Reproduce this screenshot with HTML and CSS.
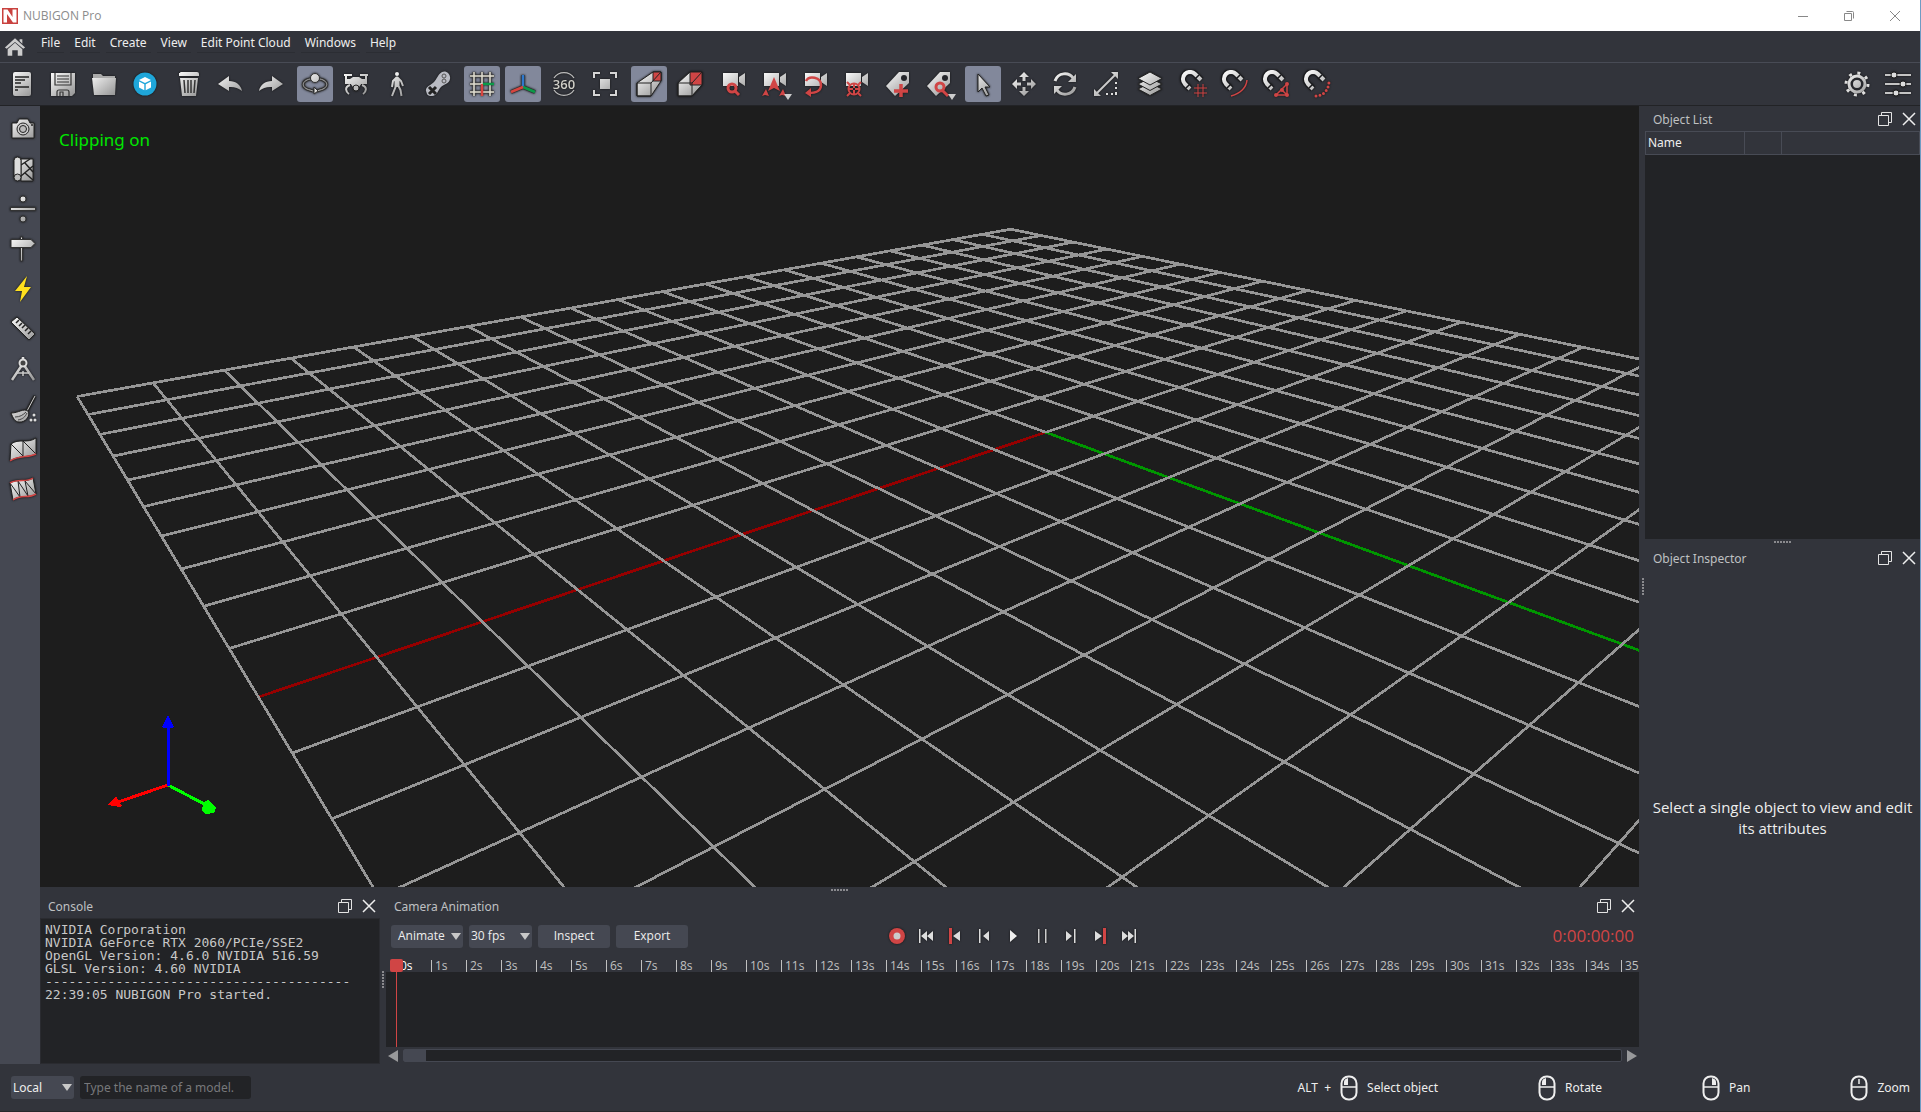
FILE: index.html
```html
<!DOCTYPE html>
<html lang="en">
<head>
<meta charset="utf-8">
<title>NUBIGON Pro</title>
<link rel="stylesheet" href="styles.css">
</head>
<body>
<svg class="defs" width="0" height="0" aria-hidden="true">
  <defs>
    <linearGradient id="metal" gradientUnits="userSpaceOnUse" x1="5" y1="3" x2="23" y2="25"><stop offset="0" stop-color="#f4f4f4"/><stop offset="1" stop-color="#9a9a9a"/></linearGradient>
    <symbol id="float" viewBox="0 0 14 14"><path d="M.5 3.500h10v10h-10zM3.500 3V.5h10v10H11" fill="none" stroke="#e4e4e4"/></symbol>
    <symbol id="close" viewBox="0 0 14 14"><path d="M1 1l12 12M13 1L1 13" fill="none" stroke="#eee" stroke-width="1.500"/></symbol>
    <symbol id="camera" viewBox="0 0 28 28"><path d="M3 3h15v13H3z" fill="url(#metal)"/><path d="M19 7l6-4v13l-6-4z" fill="url(#metal)"/></symbol>
    <symbol id="tag" viewBox="0 0 28 28"><path d="M2 16L15 2h10v11L11 26z" fill="url(#metal)"/><circle cx="20" cy="8" r="3" fill="#24252a"/></symbol>
    <symbol id="magnet" viewBox="0 0 28 28"><path d="M10 19L5 14A7 7 0 0 1 15 4l6 6" fill="none" stroke="#17181b" stroke-width="6"/><path d="M10 19L5 14A7 7 0 0 1 15 4l6 6" fill="none" stroke="url(#metal)" stroke-width="4"/><path d="M6 18l4-4M15 9l4-4" stroke="#17181b" stroke-width="1.500"/></symbol>
    <symbol id="mouse" viewBox="0 0 18 26"><rect x="1.500" y="1.500" width="15" height="23" rx="7" fill="none" stroke="#eee" stroke-width="2"/><path d="M2 12h14" stroke="#eee" stroke-width="1.500"/></symbol>
  </defs>
</svg>
<div class="app">
  <header class="titlebar">
    <svg class="logo" viewBox="0 0 16 16"><rect width="16" height="16" fill="#c9423f"/><path d="M1.500 1.500h4L10.500 9V1.500h4v13h-3.500L5 6v8.500H1.500z" fill="#fff"/></svg>
    <h1>NUBIGON Pro</h1>
    <div class="window-buttons">
      <button aria-label="Minimize"><svg viewBox="0 0 12 12"><path d="M1 6.500h10" stroke="#888"/></svg></button>
      <button aria-label="Restore"><svg viewBox="0 0 12 12"><path d="M1.500 3.500h7v7h-7zM3.500 1.500h6q1 0 1 1v6" fill="none" stroke="#888"/></svg></button>
      <button aria-label="Close window"><svg viewBox="0 0 12 12"><path d="M1 1l10 10M11 1L1 11" stroke="#888"/></svg></button>
    </div>
  </header>

  <nav class="menubar">
    <button class="home" aria-label="Home"><svg viewBox="0 0 24 20"><path d="M12 1l11 10-2 1.500L12 5l-9 7.500L1 11z" fill="#ccc"/><path d="M4 13l8-7 8 7v7h-5v-6H9v6H4zM17 2h3v5l-3-3z" fill="#ccc"/></svg></button>
    <button>File</button><button>Edit</button><button>Create</button><button>View</button><button>Edit Point Cloud</button><button>Windows</button><button>Help</button>
  </nav>

  <div class="toolbar" role="toolbar">
    <div class="group">
      <button aria-label="New"><svg viewBox="0 0 28 28"><rect x="5" y="2" width="18" height="24" rx="2" fill="url(#metal)"/><path d="M7 7h14M7 10h10M7 13h6M7 17h14M7 20h3" stroke="#222" stroke-width="1.500"/></svg></button>
      <button aria-label="Save"><svg viewBox="0 0 28 28"><path d="M2 3h24v20l-3 3H2z" fill="url(#metal)"/><path d="M6 3v12h16V3M8 6h12M8 9h12M8 12h12M8 26v-4q0-2 2-2h8q2 0 2 2v4M11 26v-4h3v4" fill="none" stroke="#333" stroke-width="1.200"/></svg></button>
      <button aria-label="Open"><svg viewBox="0 0 28 28"><path d="M3 9V4h8l2 2h12v3z" fill="#aaa"/><path d="M2 8h24l-1 17H4z" fill="url(#metal)"/></svg></button>
      <button aria-label="Models"><svg viewBox="0 0 28 28"><circle cx="14" cy="14" r="11.500" fill="#1fa6d9"/><path d="M14 7l6 3-6 3-6-3zM8 11.500l5.300 2.700v6L8 17.500zM20 11.500l-5.300 2.700v6l5.300-2.700z" fill="#fff"/></svg></button>
    </div>
    <div class="group">
      <button aria-label="Delete"><svg viewBox="0 0 28 28"><path d="M5 3q0-1 1-1h16q2 0 2 2v2H4V3zM5 8h18l-2 18H7z" fill="url(#metal)"/><path d="M9 10l1 13M13 10v13M16 10v13M20 10l-1 13" stroke="#333" stroke-width="1.500"/></svg></button>
      <button aria-label="Undo"><svg viewBox="0 0 28 28"><path d="M2 14l11-8v5c7 0 12 4 13 10-4-3-8-4.500-13-4v4z" fill="url(#metal)"/></svg></button>
      <button aria-label="Redo"><svg viewBox="0 0 28 28"><path d="M26 14L15 6v5C8 11 3 15 2 21c4-3 8-4.500 13-4v4z" fill="url(#metal)"/></svg></button>
    </div>
    <div class="group">
      <button class="active" aria-label="Orbit"><svg viewBox="0 0 28 28"><path d="M19 9c9 2 9 9 0 11l-3 1M9 9c-9 2-9 9 0 11l3 1" fill="none" stroke="#333" stroke-width="3"/><path d="M19 9c9 2 9 9 0 11l-3 1M9 9c-9 2-9 9 0 11l3 1" fill="none" stroke="#aaa"/><path d="M13 17l4 4-4 3z" fill="#ddd" stroke="#333"/><circle cx="14" cy="8" r="4.500" fill="url(#metal)" stroke="#333"/></svg></button>
      <button aria-label="Drone"><svg viewBox="0 0 28 28"><path d="M2 5h8M18 5h8M4 6v7h20V6M8 15c-6 2-4 7-1 9M20 15c6 2 4 7 1 9" fill="none" stroke="url(#metal)" stroke-width="2"/><path d="M3 9h5l3-2h6l3 2h5v4h-5l-3 4h-6l-3-4H3z" fill="url(#metal)"/><circle cx="14" cy="18" r="3" fill="#bbb" stroke="#222"/></svg></button>
      <button aria-label="Walk"><svg viewBox="0 0 28 28"><circle cx="14" cy="4" r="2" fill="#eee"/><path d="M14 7l-4 4-1 6M14 7l4 4 2 5M12.500 8v9L9 26M15.500 8v8l2 4 1 6M14 8v9" fill="none" stroke="url(#metal)" stroke-width="2"/></svg></button>
      <button aria-label="Gamepad"><svg viewBox="0 0 28 28"><path d="M2 21c-1-4 5-6 8-9S14 4 18 2s9 2 8 7-6 5-9 8-4 9-9 9-5-2-6-5z" fill="#b9bbc3"/><circle cx="20" cy="6" r="2" fill="none" stroke="#555"/><circle cx="20" cy="11" r="2" fill="none" stroke="#555"/><path d="M5 17l7 7M12 17l-7 7" stroke="#222" stroke-width="3"/></svg></button>
    </div>
    <div class="group">
      <button class="active" aria-label="Grid"><svg viewBox="0 0 28 28"><path d="M6 2v24M14 2v12M22 2v24M2 6h24M2 14h12M2 22h24" stroke="#444" stroke-width="3"/><path d="M6 2v24M14 2v12M22 2v24M2 6h24M2 14h12M2 22h24" stroke="#e0ddd0" stroke-width="1.500"/><path d="M14 14v12" stroke="#d8443f" stroke-width="2.500"/><path d="M15 14h11" stroke="#0b9a48" stroke-width="2.500"/></svg></button>
      <button class="active" aria-label="Axes"><svg viewBox="0 0 28 28"><g stroke="#333" stroke-width="4"><path d="M14 5v12M14 17l12 5M14 17L2 22"/></g><path d="M14 5v12" stroke="#2f78cc" stroke-width="2.500"/><path d="M14 17l12 5" stroke="#0b9a48" stroke-width="2.500"/><path d="M14 17L2 22" stroke="#d8443f" stroke-width="2.500"/></svg></button>
      <button aria-label="Panorama"><svg viewBox="0 0 28 28"><path d="M4 8a12 12 0 0 1 20 0M4 20a12 12 0 0 0 20 0" fill="none" stroke="#bbb" stroke-width="1.300"/><text x="14" y="19" text-anchor="middle" class="icon-text">360</text></svg></button>
      <button aria-label="Focus"><svg viewBox="0 0 28 28"><path d="M9 3H3v5M19 3h6v5M9 25H3v-5M19 25h6v-5" fill="none" stroke="#d5d5d5" stroke-width="2"/><rect x="9" y="9" width="10" height="10" fill="url(#metal)"/></svg></button>
    </div>
    <div class="group">
      <button class="active" aria-label="Clip outside"><svg viewBox="0 0 28 28"><path d="M2 13L18 2h8v9L16 26H2z" fill="url(#metal)" stroke="#222"/><path d="M18 2h8v9h-8z" fill="#d04545" stroke="#222"/><path d="M2 13h14v13H2zM16 13L26 2" fill="none" stroke="#222"/></svg></button>
      <button aria-label="Clip inside"><svg viewBox="0 0 28 28"><path d="M2 13L14 2h12v13L16 26H2z" fill="url(#metal)" stroke="#222"/><path d="M14 2h12v13H14z" fill="#d04545"/><path d="M14 2h12v13H14zM2 13h14v13H2zM16 13L26 2M16 26L26 15" fill="none" stroke="#222"/></svg></button>
    </div>
    <div class="group">
      <button aria-label="Find camera"><svg viewBox="0 0 28 28"><use href="#camera"/><circle cx="12" cy="18" r="4" fill="none" stroke="#d04545" stroke-width="3"/><path d="M15 21l4 4" stroke="#d04545" stroke-width="3"/></svg></button>
      <button class="drop" aria-label="Camera path"><svg viewBox="0 0 28 28"><use href="#camera"/><path d="M13 7l6 14-6-3-6 3zM5 19l3 7-4-1-3 1zM22 19l3 7-4-1-3 1z" fill="#d04545"/></svg></button>
      <button aria-label="Reset camera"><svg viewBox="0 0 28 28"><use href="#camera"/><path d="M4 11c3-6 15-4 15 4 0 7-6 8-13 8" fill="none" stroke="#d04545" stroke-width="2.500"/><path d="M3 23l6-5v9z" fill="#d04545"/></svg></button>
      <button aria-label="Camera target"><svg viewBox="0 0 28 28"><use href="#camera"/><circle cx="11" cy="19" r="5.500" fill="none" stroke="#d04545" stroke-width="2"/><path d="M11 14v4M11 20v5M5 19h5M12 19h5M4 12l3 3M18 12l-3 3M4 26l3-3M18 26l-3-3" stroke="#d04545" stroke-width="2"/></svg></button>
      <button aria-label="Add tag"><svg viewBox="0 0 28 28"><use href="#tag"/><path d="M17 14v13M10 21h14" stroke="#d04545" stroke-width="3.500"/></svg></button>
      <button class="drop" aria-label="Find tag"><svg viewBox="0 0 28 28"><use href="#tag"/><circle cx="15" cy="17" r="4" fill="none" stroke="#d04545" stroke-width="3"/><path d="M17 20l6 6" stroke="#d04545" stroke-width="3"/></svg></button>
    </div>
    <div class="group">
      <button class="active" aria-label="Select"><svg viewBox="0 0 28 28"><path d="M9 4v18l4-4 4 8 3-1-4-8h5z" fill="url(#metal)" stroke="#222"/></svg></button>
      <button aria-label="Move"><svg viewBox="0 0 28 28"><path d="M14 2l5 5h-3.500v4h-3V7H9zM14 26l5-5h-3.500v-4h-3v4H9zM2 14l5-5v3.500h4v3H7V19zM26 14l-5-5v3.500h-4v3h4V19z" fill="url(#metal)"/></svg></button>
      <button aria-label="Rotate"><svg viewBox="0 0 28 28"><path d="M4 11C7 2 18 2 22 8M24 17c-3 9-14 9-18 3" fill="none" stroke="url(#metal)" stroke-width="3"/><path d="M25 4v8h-8zM3 24v-8h8z" fill="url(#metal)"/></svg></button>
      <button aria-label="Scale"><svg viewBox="0 0 28 28"><path d="M4 24L24 4" stroke="#ccc" stroke-width="2"/><path d="M26 2v7l-7-7zM2 26v-7l7 7z" fill="url(#metal)"/><path d="M24 12v2M24 17v2M24 22v3M19 24h2M14 24h2" stroke="#ddd" stroke-width="2"/></svg></button>
    </div>
    <div class="group">
      <button aria-label="Layers"><svg viewBox="0 0 28 28"><g fill="url(#metal)" stroke="#222"><path d="M14 13l12 6-12 6.500L2 19z"/><path d="M14 8l12 6-12 6.500L2 14z"/><path d="M14 2l12 6.500-12 6.500L2 8.500z"/></g></svg></button>
    </div>
    <div class="group">
      <button aria-label="Snap to grid"><svg viewBox="0 0 28 28"><use href="#magnet"/><path d="M18 14v13M23 14v13M14 18h13M14 23h13" stroke="#d04545"/></svg></button>
      <button aria-label="Snap to curve"><svg viewBox="0 0 28 28"><use href="#magnet"/><path d="M10 26c7-2 15-6 16-16" fill="none" stroke="#d04545" stroke-width="1.500"/></svg></button>
      <button aria-label="Snap to mesh"><svg viewBox="0 0 28 28"><use href="#magnet"/><path d="M14 25L25 14v11zM20 20l5 5" fill="none" stroke="#d04545" stroke-width="1.500"/><g fill="#d04545"><circle cx="14" cy="25" r="2"/><circle cx="25" cy="25" r="2"/><circle cx="20" cy="20" r="2"/><circle cx="25" cy="14" r="2"/></g></svg></button>
      <button aria-label="Snap to points"><svg viewBox="0 0 28 28"><use href="#magnet"/><path d="M13 26c7 0 13-6 13-15" fill="none" stroke="#d04545" stroke-width="3" stroke-linecap="round" stroke-dasharray="0 4"/></svg></button>
    </div>
    <div class="group end">
      <button aria-label="Settings"><svg viewBox="0 0 28 28"><circle cx="14" cy="14" r="11" fill="none" stroke="#ddd" stroke-width="3" stroke-dasharray="3 5.640"/><circle cx="14" cy="14" r="8" fill="none" stroke="url(#metal)" stroke-width="3"/><circle cx="14" cy="14" r="4" fill="url(#metal)"/></svg></button>
      <button aria-label="Preferences"><svg viewBox="0 0 28 28"><path d="M1 5h26M1 14h26M1 23h26" stroke="#c4c4c4" stroke-width="2"/><g fill="#ddd" stroke="#222"><circle cx="10" cy="5" r="3"/><circle cx="19" cy="14" r="3"/><circle cx="12" cy="23" r="3"/></g></svg></button>
    </div>
  </div>

  <main class="workspace">
    <aside class="sidebar">
      <button aria-label="Snapshot"><svg viewBox="0 0 28 28"><path d="M3 8h5l2-4h9l2 4h4v15H3z" fill="url(#metal)" stroke="#222"/><circle cx="14" cy="14" r="6" fill="#ccc" stroke="#222"/><circle cx="14" cy="14" r="3.500" fill="#bbb" stroke="#222"/><circle cx="23" cy="10" r="1" fill="#222"/></svg></button>
      <button aria-label="Map"><svg viewBox="0 0 28 28"><path d="M12 4h12v22H12z" fill="url(#metal)" stroke="#222"/><path d="M12 10l9-6M16 8l8 9M24 11L12 21M16 18l8 7" fill="none" stroke="#222" stroke-width="1.500"/><rect x="5" y="2" width="7" height="23" rx="3.500" fill="#ddd" stroke="#222"/><circle cx="8.500" cy="22.500" r="3.500" fill="#bbb" stroke="#222"/></svg></button>
      <button aria-label="Slice"><svg viewBox="0 0 28 28"><g fill="url(#metal)" stroke="#333"><rect x="1.500" y="12.500" width="25" height="3"/><circle cx="14" cy="4" r="3"/><circle cx="14" cy="24" r="3"/></g></svg></button>
      <button aria-label="Annotation"><svg viewBox="0 0 28 28"><g fill="url(#metal)" stroke="#333"><path d="M11.500 2h2v24h-2z"/><path d="M2 4.500h20l4 4-4 4H2z"/></g></svg></button>
      <button aria-label="Quick actions"><svg viewBox="0 0 28 28"><path d="M18 1L6 16h7l-2 11 11-15h-7z" fill="#ffe01e"/></svg></button>
      <button aria-label="Measure"><svg viewBox="0 0 28 28"><path d="M2 7l6-5 18 17-6 6z" fill="url(#metal)" stroke="#222"/><path d="M10 5l-3 3M13 8l-3 3M16 10l-3 3M19 13l-3 3M22 16l-3 3" stroke="#222" stroke-width="1.500"/></svg></button>
      <button aria-label="Angle"><svg viewBox="0 0 28 28"><path d="M13 10L3 25M15 10l10 15M14 2v4" stroke="url(#metal)" stroke-width="2.500"/><path d="M8 18h12M14 16v5" stroke="#ccc" stroke-width="1.500"/><circle cx="14" cy="8" r="3.500" fill="#444" stroke="#ddd" stroke-width="2"/></svg></button>
      <button aria-label="Clean"><svg viewBox="0 0 28 28"><path d="M26 1l-8 15" stroke="#222" stroke-width="3"/><path d="M26 1l-8 15" stroke="#ccc"/><path d="M2 18c8 0 12-5 17-2 3 5-3 12-9 11-4 0-6-4-8-9z" fill="url(#metal)" stroke="#222"/><path d="M6 22c5 0 8-2 11-5M9 25c5-1 7-3 9-7" fill="none" stroke="#444"/><g fill="#ddd"><circle cx="25" cy="20" r="1.500"/><circle cx="22" cy="25" r="1.500"/><circle cx="26" cy="25" r="1.500"/></g></svg></button>
      <button aria-label="Surface"><svg viewBox="0 0 28 28"><path d="M2 9c8-6 16 0 25-6v16c-8 4-17 1-26 7z" fill="url(#metal)" stroke="#222"/><path d="M2 9l12 12V6l13 13" fill="none" stroke="#222"/><path d="M1 26c9-6 18-3 26-7" fill="none" stroke="#d04545" stroke-width="1.500"/></svg></button>
      <button aria-label="Dense surface"><svg viewBox="0 0 28 28"><path d="M1 8c8-5 16 0 23-5l3 16c-8 5-15 0-23 6z" fill="url(#metal)" stroke="#222"/><path d="M1 8l10 14L9 6l10 15-3-15 11 13" fill="none" stroke="#222"/><path d="M1 8c8-5 16 0 23-5M4 25c8-6 15-1 23-6" fill="none" stroke="#d04545" stroke-width="1.500"/></svg></button>
    </aside>

    <div class="center">
      <section class="viewport" aria-label="Viewport">
        <svg class="scene" viewBox="40 106 1599 781" preserveAspectRatio="xMinYMin slice">
          <g id="grid" class="grid"></g>
          <g class="gizmo">
            <g stroke="#f00" fill="#f00"><path d="M168 785L118 802"/><path d="M108 805l8-9 6 10-2 1z" stroke="none"/></g>
            <g stroke="#0f0" fill="#0f0"><path d="M168 785l38 20"/><path d="M216 808l-8-8-5 3-1 8 3 3 9-1z" stroke="none"/></g>
            <g stroke="#00f" fill="#00f"><path d="M168 786V727"/><path d="M168 715l-6 12q6 3 12 0z" stroke="none"/></g>
          </g>
        </svg>
        <p class="viewport-note">Clipping on</p>
      </section>

      <div class="split-h"><i class="dots"></i></div>

      <div class="docks">
        <section class="console dock">
          <div class="dock-title"><h2>Console</h2><button aria-label="Float console"><svg><use href="#float"/></svg></button><button aria-label="Close console"><svg><use href="#close"/></svg></button></div>
          <pre>NVIDIA Corporation
NVIDIA GeForce RTX 2060/PCIe/SSE2
OpenGL Version: 4.6.0 NVIDIA 516.59
GLSL Version: 4.60 NVIDIA
---------------------------------------
22:39:05 NUBIGON Pro started.</pre>
        </section>
        <div class="split-v"><i class="dots vertical"></i></div>
        <section class="animation dock">
          <div class="dock-title"><h2>Camera Animation</h2><button aria-label="Float animation"><svg><use href="#float"/></svg></button><button aria-label="Close animation"><svg><use href="#close"/></svg></button></div>
          <div class="controls">
            <div class="controls-left">
              <button class="btn menu">Animate<i class="caret"></i></button>
              <div class="select fps"><select aria-label="Frame rate"><option>30 fps</option></select><i class="caret"></i></div>
              <button class="btn">Inspect</button>
              <button class="btn">Export</button>
            </div>
            <div class="transport">
              <button aria-label="Record"><svg viewBox="0 0 16 16"><circle cx="8" cy="8" r="8" fill="#d04545"/><circle cx="8" cy="8" r="3.500" fill="#ccc"/></svg></button>
              <button aria-label="First"><svg viewBox="0 0 16 16"><path d="M1 1h1.500v14H1zM9 3v10L3 8zM15 3v10L9 8z" fill="#ddd"/></svg></button>
              <button aria-label="Previous key"><svg viewBox="0 0 16 16"><path d="M2 0h3v16H2z" fill="#d04545"/><path d="M13 3v10L6 8z" fill="#ddd"/></svg></button>
              <button aria-label="Step back"><svg viewBox="0 0 16 16"><path d="M3 1h1.500v14H3zM13 3v10L7 8z" fill="#ddd"/></svg></button>
              <button aria-label="Play"><svg viewBox="0 0 16 16"><path d="M5 2l7 6-7 6z" fill="#eee"/></svg></button>
              <button aria-label="Pause"><svg viewBox="0 0 16 16"><path d="M4 1h1.500v14H4zM11 1h1.500v14H11z" fill="#ccc"/></svg></button>
              <button aria-label="Step forward"><svg viewBox="0 0 16 16"><path d="M11 1h1.500v14H11zM3 3v10l6-5z" fill="#ddd"/></svg></button>
              <button aria-label="Next key"><svg viewBox="0 0 16 16"><path d="M11 0h3v16h-3z" fill="#d04545"/><path d="M3 3v10l7-5z" fill="#ddd"/></svg></button>
              <button aria-label="Last"><svg viewBox="0 0 16 16"><path d="M13.500 1H15v14h-1.500zM1 3v10l6-5zM7 3v10l6-5z" fill="#ddd"/></svg></button>
            </div>
            <output class="timecode">0:00:00:00</output>
          </div>
          <div class="timeline">
            <ol class="ruler"><li>0s</li><li>1s</li><li>2s</li><li>3s</li><li>4s</li><li>5s</li><li>6s</li><li>7s</li><li>8s</li><li>9s</li><li>10s</li><li>11s</li><li>12s</li><li>13s</li><li>14s</li><li>15s</li><li>16s</li><li>17s</li><li>18s</li><li>19s</li><li>20s</li><li>21s</li><li>22s</li><li>23s</li><li>24s</li><li>25s</li><li>26s</li><li>27s</li><li>28s</li><li>29s</li><li>30s</li><li>31s</li><li>32s</li><li>33s</li><li>34s</li><li>35s</li></ol>
            <div class="tracks"></div>
            <div class="playhead"></div>
          </div>
          <div class="scrollbar"><button class="arrow back" aria-label="Scroll left"></button><div class="track"><div class="thumb"></div></div><button class="arrow forward" aria-label="Scroll right"></button></div>
        </section>
      </div>
    </div>

    <aside class="right">
      <section class="object-list dock">
        <div class="dock-title"><h2>Object List</h2><button aria-label="Float object list"><svg><use href="#float"/></svg></button><button aria-label="Close object list"><svg><use href="#close"/></svg></button></div>
        <div class="list">
          <table><thead><tr><th class="name">Name</th><th class="flag"></th><th></th></tr></thead></table>
        </div>
      </section>
      <div class="split-h"><i class="dots"></i></div>
      <section class="inspector dock">
        <div class="dock-title"><h2>Object Inspector</h2><button aria-label="Float inspector"><svg><use href="#float"/></svg></button><button aria-label="Close inspector"><svg><use href="#close"/></svg></button></div>
        <p>Select a single object to view and edit its attributes</p>
      </section>
      <i class="dots vertical side"></i>
    </aside>
  </main>

  <footer class="status">
    <div class="select space"><select aria-label="Coordinate space"><option>Local</option></select><i class="caret"></i></div>
    <input type="text" aria-label="Model name" placeholder="Type the name of a model.">
    <div class="hints">
      <span class="hint"><span>ALT&nbsp; +</span><svg viewBox="0 0 18 26"><use href="#mouse"/><path d="M4 10V7q0-3 4-4v7z" fill="#eee"/></svg>Select object</span>
      <span class="hint"><svg viewBox="0 0 18 26"><use href="#mouse"/><path d="M4 10V7q0-3 4-4v7z" fill="#eee"/></svg>Rotate</span>
      <span class="hint"><svg viewBox="0 0 18 26"><use href="#mouse"/><path d="M14 10V7q0-3-4-4v7z" fill="#eee"/></svg>Pan</span>
      <span class="hint"><svg viewBox="0 0 18 26"><use href="#mouse"/><path d="M9 4v5" stroke="#eee" stroke-width="1.500"/></svg>Zoom</span>
    </div>
  </footer>
</div>
<script src="grid.js"></script>
</body>
</html>
```
FILE: styles.css
```css
* { box-sizing: border-box; }
body { margin: 0; background: #32343b; color: #eee; font: 12px/16px "Noto Sans", "Open Sans", sans-serif; }
h1, h2, p, pre, ol { margin: 0; padding: 0; font: inherit; }
button { border: 0; padding: 0; background: none; color: inherit; font: inherit; }
svg { display: block; }
.defs { position: absolute; }
.app { display: flex; flex-direction: column; height: 100vh; border-right: 1px solid #6f9cc4; overflow: hidden; }

.titlebar { display: flex; align-items: center; height: 31px; flex: none; padding-left: 2px; background: #fff; color: #8c8c8c; font-family: "Open Sans", sans-serif; }
.logo { width: 16px; height: 16px; margin-right: 5px; }
.titlebar h1 { flex: 1; }
.window-buttons { display: flex; }
.window-buttons button { display: grid; place-items: center; width: 46px; height: 30px; }
.window-buttons svg { width: 12px; height: 12px; }
.window-buttons button:last-child { margin-right: 2px; }

.menubar { display: flex; align-items: flex-start; height: 32px; flex: none; padding: 3px 4px; border-bottom: 1px solid #484b55; }
.menubar button { height: 19px; padding: 0 4px; margin-right: 6px; border-bottom: 1px solid #2b2d33; }
.menubar .home { height: auto; padding: 3px 0 0; margin-right: 11px; border: 0; }
.home svg { width: 22px; height: 19px; }

.toolbar { display: flex; gap: 8px; height: 43px; flex: none; padding: 3px 4px; border-bottom: 1px solid #222326; }
.group { display: flex; gap: 5px; }
.end { margin-left: auto; }
.toolbar button, .sidebar button { display: grid; place-items: center; width: 36px; height: 36px; border-radius: 3px; }
.toolbar button svg, .sidebar button svg { width: 28px; height: 28px; fill: none; filter: drop-shadow(0 0 1px #111); }
.toolbar .active { background: #82889b; }
.toolbar .drop { position: relative; }
.drop::after { content: ""; position: absolute; right: 1px; bottom: 2px; border: 4px solid transparent; border-top: 6px solid #ccc; border-bottom: 0; }
.icon-text { fill: #d0cfc8; font: 600 13px "Open Sans", sans-serif; }

.workspace { display: flex; flex: 1; min-height: 0; }
.sidebar { display: flex; flex-direction: column; gap: 4px; width: 40px; flex: none; padding: 5px 0 0 5px; background: #454852; }
.center { display: flex; flex-direction: column; flex: 1; min-width: 0; }
.viewport { position: relative; flex: 1; min-height: 0; background: #1d1d1d; overflow: hidden; }
.scene { width: 100%; height: 100%; }
.grid { stroke-width: 2.700; stroke: #969696; shape-rendering: crispEdges; }
.grid .x { stroke: #960000; }
.grid .y { stroke: #009600; }
.gizmo { stroke-width: 3; shape-rendering: crispEdges; }
.viewport-note { position: absolute; left: 19px; top: 22px; color: #00e600; font-size: 17px; line-height: 24px; }

.split-h { display: flex; justify-content: center; height: 7px; flex: none; padding-top: 2px; }
.dots { width: 17px; height: 2px; background: repeating-linear-gradient(90deg, #8a8a8e 0 2px, transparent 2px 3px); }
.dots.vertical { width: 2px; height: 17px; background: repeating-linear-gradient(#8a8a8e 0 2px, transparent 2px 3px); }
.split-v { display: flex; align-items: center; justify-content: center; width: 6px; flex: none; }

.docks { display: flex; height: 170px; flex: none; }
.dock { display: flex; flex-direction: column; min-width: 0; }
.dock-title { display: flex; align-items: center; gap: 10px; height: 24px; flex: none; padding: 0 4px 0 8px; color: #bfc0c2; }
.dock-title h2 { flex: 1; padding-top: 2px; }
.dock-title svg { width: 14px; height: 14px; }
.console { width: 340px; flex: none; }
.console pre { flex: 1; padding: 4px; border: 1px solid #2a2b30; background: #222326; color: #c8c8c8; font: 13px/13px "DejaVu Sans Mono", monospace; }
.animation { flex: 1; font-family: "Open Sans", sans-serif; }
.animation .dock-title { padding-right: 4px; font-family: "Noto Sans", sans-serif; }
.controls { display: grid; grid-template-columns: 1fr auto 1fr; align-items: center; height: 36px; padding: 0 5px; }
.controls-left { display: flex; gap: 6px; }
.btn { width: 72px; height: 23px; border-radius: 3px; background: #454852; }
.menu { display: flex; align-items: center; justify-content: space-between; padding: 0 2px 0 7px; }
.caret { border: 5px solid transparent; border-top: 7px solid #c8c8c8; border-bottom: 0; }
.select { position: relative; height: 23px; }
.select select { width: 100%; height: 23px; padding: 0 2px; border: 0; border-radius: 3px; background: #454852; color: #eee; font: inherit; appearance: none; }
.select .caret { position: absolute; right: 2px; top: 8px; pointer-events: none; }
.fps { width: 63px; }
.transport { display: flex; gap: 13px; }
.transport svg { width: 16px; height: 16px; filter: drop-shadow(0 0 1px #111); }
.timecode { justify-self: end; color: #d04545; font-size: 17px; line-height: 20px; }
.timeline { position: relative; display: flex; flex-direction: column; flex: 1; min-height: 0; overflow: hidden; }
.ruler { display: flex; height: 18px; flex: none; padding-left: 10px; list-style: none; color: #c0c0c0; line-height: 16px; }
.ruler li { width: 35px; flex: none; padding: 4px 0 0 4px; background: linear-gradient(#c0c0c0, #c0c0c0) left bottom / 1px 12px no-repeat; }
.ruler li:first-child { color: #fff; }
.tracks { flex: 1; background: #222326; }
.playhead { position: absolute; left: 10px; top: 5px; bottom: 0; width: 1px; background: #d04545; }
.playhead::before { content: ""; position: absolute; left: -6px; top: 0; width: 13px; height: 13px; border-radius: 2px; background: #d04545; }
.scrollbar { display: flex; align-items: center; gap: 5px; height: 17px; flex: none; padding: 0 2px; }
.track { flex: 1; height: 13px; border: 1px solid #454852; border-radius: 2px; background: #222326; }
.thumb { width: 22px; height: 11px; background: #454852; }
.arrow { border: 6px solid transparent; }
.arrow.back { border-left: 0; border-right: 10px solid #98999b; }
.arrow.forward { border-right: 0; border-left: 10px solid #98999b; }

.right { position: relative; display: flex; flex-direction: column; width: 281px; flex: none; padding-left: 6px; }
.object-list { flex: 433 1 0; }
.object-list .dock-title { height: 25px; }
.list { flex: 1; background: #222326; }
.list table { width: 100%; border-collapse: collapse; table-layout: fixed; background: #32343b; }
.list th { height: 23px; padding: 0 2px; border: 1px solid #484b55; font-weight: 400; text-align: left; }
.list .name { width: 99px; }
.list .flag { width: 37px; }
.inspector { flex: 518 1 0; }
.inspector p { flex: 1; display: grid; place-items: center; padding: 2px 4px 0; text-align: center; font: 15px/21px "Open Sans", sans-serif; }
.side { position: absolute; left: 3px; top: 472px; }

.status { display: flex; align-items: center; gap: 6px; height: 48px; flex: none; padding: 0 10px 0 11px; border-bottom: 1px solid #26272b; }
.space { width: 63px; }
.status input { width: 171px; height: 23px; padding: 0 4px; border: 0; border-radius: 3px; background: #222326; color: #eee; font: inherit; }
.status input::placeholder { color: #77787b; opacity: 1; }
.hints { display: flex; gap: 100px; margin-left: auto; }
.hint { display: flex; align-items: center; gap: 9px; }
.hint svg { width: 18px; height: 26px; }
```
FILE: grid.js
```js
// Ground plane: 20 x 20 cells projected in perspective onto the viewport.
const SVG = "http://www.w3.org/2000/svg";
const grid = document.getElementById("grid");

function project(s, t) {
  const w = 1 + 0.034124 * s - 0.042215 * t;
  return [
    (77.1 + 81.177 * s + 7.2216 * t) / w,
    (396.5 - 0.544 * s + 0.6261 * t) / w,
  ];
}

function line(s1, t1, s2, t2, name) {
  const [x1, y1] = project(s1, t1);
  const [x2, y2] = project(s2, t2);
  const el = document.createElementNS(SVG, "path");
  el.setAttribute("d", `M${x1.toFixed(1)} ${y1.toFixed(1)}L${x2.toFixed(1)} ${y2.toFixed(1)}`);
  if (name) el.setAttribute("class", name);
  grid.append(el);
}

// The two half axes take the place of the centre lines on their side.
line(0, 10, 10, 10, "x");
line(10, 10, 10, 20, "y");
line(10, 10, 20, 10);
line(10, 0, 10, 10);
for (let i = 0; i <= 20; i++) {
  if (i === 10) continue;
  line(i, 0, i, 20);
  line(0, i, 20, i);
}
```
